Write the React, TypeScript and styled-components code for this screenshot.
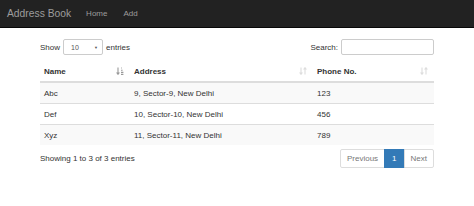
import React from 'react'
import styled, { createGlobalStyle } from 'styled-components'

const GlobalStyle = createGlobalStyle`
  html, body {
    margin: 0;
    padding: 0;
    background: #fff;
    font-family: "Liberation Sans", Arial, sans-serif;
    font-size: 8px;
    color: #333;
  }
`

const NavBar = styled.div`
  display: flex;
  align-items: center;
  height: 27px;
  background: #222;
  border-bottom: 1px solid #080808;
  padding: 0 7px;
`

const Brand = styled.div`
  font-size: 10.3px;
  color: #9d9d9d;
  margin-right: 15px;
`

const NavLink = styled.div`
  font-size: 8px;
  color: #9d9d9d;
  margin-right: 16px;
`

const Container = styled.div`
  width: 394px;
  margin: 0 auto;
  padding-top: 11px;
`

const TopRow = styled.div`
  display: flex;
  justify-content: space-between;
  align-items: center;
  height: 16px;
`

const Label = styled.label`
  display: flex;
  align-items: center;
  gap: 3px;
`

const Select = styled.div`
  width: 40px;
  height: 16px;
  border: 1px solid #ccc;
  border-radius: 2px;
  display: flex;
  align-items: center;
  justify-content: space-between;
  padding: 0 4px 0 7px;
  box-sizing: border-box;
  font-size: 7px;
  color: #555;
`

const Caret = styled.span`
  font-size: 4px;
`

const SearchBox = styled.div`
  width: 93px;
  height: 16px;
  border: 1px solid #ccc;
  border-radius: 2px;
  box-sizing: border-box;
`

const Table = styled.table`
  width: 100%;
  table-layout: fixed;
  border-collapse: collapse;
  margin-top: 7px;
`

const Th = styled.th<{ $w?: number }>`
  box-sizing: border-box;
  width: ${p => (p.$w ? `${p.$w}px` : 'auto')};
  text-align: left;
  font-weight: bold;
  padding: 0 4px;
  height: 20px;
  border-bottom: 2px solid #ddd;
  position: relative;
`

const SortIcon = styled.svg<{ $active?: boolean }>`
  position: absolute;
  right: 6px;
  top: 5px;
  width: 8px;
  height: 8px;
  color: ${p => (p.$active ? '#999' : '#ddd')};
`

const Row = styled.tr<{ $odd: boolean }>`
  background: ${p => (p.$odd ? '#f9f9f9' : '#fff')};
`

const Td = styled.td`
  padding: 0 4px;
  height: 20px;
  border-top: 1px solid #ddd;
`

const BottomRow = styled.div`
  display: flex;
  justify-content: space-between;
  align-items: center;
  margin-top: 4px;
`

const Pager = styled.div`
  display: flex;
  height: 19px;
`

const PageBtn = styled.div<{ $active?: boolean; $first?: boolean; $last?: boolean }>`
  display: flex;
  align-items: center;
  padding: 0 ${p => (p.$active ? 7 : 6)}px;
  border: 1px solid ${p => (p.$active ? '#337ab7' : '#ddd')};
  margin-left: -1px;
  background: ${p => (p.$active ? '#337ab7' : '#fff')};
  color: ${p => (p.$active ? '#fff' : '#777')};
  border-radius: ${p => (p.$first ? '2px 0 0 2px' : p.$last ? '0 2px 2px 0' : '0')};
`

const Sort = ({ active }: { active?: boolean }) => (
  <SortIcon $active={active} viewBox="0 0 8 8">
    <path d="M2 0.5V7M0.6 5.5L2 7.3L3.4 5.5" stroke="currentColor" strokeWidth="1.1" fill="none" />
    {active ? (
      <path d="M5 1h0.8M5 3.2h1.6M5 5.4h2.4M5 7.4h2.4" stroke="currentColor" strokeWidth="1.1" />
    ) : (
      <path d="M6 7.5V1M4.6 2.5L6 0.7L7.4 2.5" stroke="currentColor" strokeWidth="1.1" fill="none" />
    )}
  </SortIcon>
)

const rows = [
  { name: 'Abc', address: '9, Sector-9, New Delhi', phone: '123' },
  { name: 'Def', address: '10, Sector-10, New Delhi', phone: '456' },
  { name: 'Xyz', address: '11, Sector-11, New Delhi', phone: '789' },
]

const App = () => {
  return (
    <>
      <GlobalStyle />
      <NavBar>
        <Brand>Address Book</Brand>
        <NavLink>Home</NavLink>
        <NavLink>Add</NavLink>
      </NavBar>
      <Container>
        <TopRow>
          <Label>
            Show
            <Select>
              10<Caret>▼</Caret>
            </Select>
            entries
          </Label>
          <Label>
            Search:
            <SearchBox />
          </Label>
        </TopRow>
        <Table>
          <thead>
            <tr>
              <Th $w={90}>
                Name<Sort active />
              </Th>
              <Th $w={183}>
                Address<Sort />
              </Th>
              <Th>
                Phone No.<Sort />
              </Th>
            </tr>
          </thead>
          <tbody>
            {rows.map((r, i) => (
              <Row key={r.name} $odd={i % 2 === 0}>
                <Td>{r.name}</Td>
                <Td>{r.address}</Td>
                <Td>{r.phone}</Td>
              </Row>
            ))}
          </tbody>
        </Table>
        <BottomRow>
          <span>Showing 1 to 3 of 3 entries</span>
          <Pager>
            <PageBtn $first>Previous</PageBtn>
            <PageBtn $active>1</PageBtn>
            <PageBtn $last>Next</PageBtn>
          </Pager>
        </BottomRow>
      </Container>
    </>
  )
}

export default App
